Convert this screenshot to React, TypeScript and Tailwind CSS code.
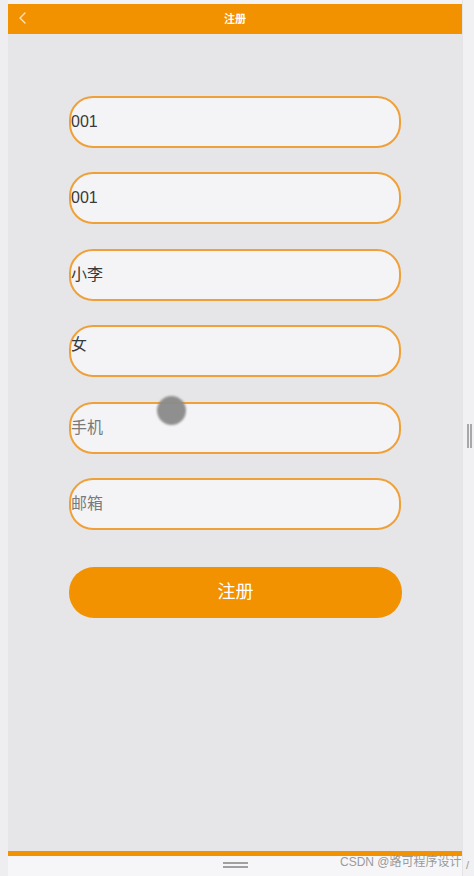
import React from "react";

const font = { fontFamily: '"Liberation Sans", "Noto Sans CJK SC", sans-serif' };

function Field({ value, placeholder, top }: { value?: string; placeholder?: string; top?: boolean }) {
  return (
    <div
      className={`w-[332px] h-[52px] rounded-[24px] border-2 border-[#efa038] bg-[#f4f4f6] flex ${top ? "items-start pt-[10px]" : "items-center"}`}
    >
      {value ? (
        <span className="text-[16px] text-[#3a3a3a] leading-none">{value}</span>
      ) : (
        <span className="text-[16px] text-[#7a7a7a] leading-none">{placeholder}</span>
      )}
    </div>
  );
}

export default function App() {
  return (
    <div className="w-[474px] h-[876px] bg-[#f3f3f5] flex relative overflow-hidden" style={font}>
      <div className="w-[8px] bg-[#eeeef0]" />
      <div className="w-[454px] flex flex-col">
        <div className="h-[4px]" />
        <div className="h-[30px] bg-[#f39200] flex items-center relative">
          <svg className="absolute left-[8px] top-[7px]" width="14" height="14" viewBox="0 0 14 14" fill="none">
            <path d="M9 2 L4 7 L9 12" stroke="#fce3bf" strokeWidth="1.4" strokeLinecap="round" strokeLinejoin="round" />
          </svg>
          <div className="flex-1 text-center text-white text-[11px] font-bold">注册</div>
        </div>
        <div className="flex-1 bg-[#e6e6e8] flex flex-col pl-[61px] pt-[62px]">
          <div className="flex flex-col gap-[24.4px]">
            <Field value="001" />
            <Field value="001" />
            <Field value="小李" />
            <Field value="女" top />
            <Field placeholder="手机" />
            <Field placeholder="邮箱" />
          </div>
          <button className="mt-[37px] w-[333px] h-[51px] rounded-[25px] bg-[#f39200] text-white text-[18px] flex items-center justify-center">
            注册
          </button>
        </div>
        <div className="h-[5px] bg-[#f39200]" />
        <div className="h-[20px] bg-[#f6f6f8] flex items-start justify-center pt-[6px]">
          <div className="flex flex-col gap-[2px]">
            <div className="w-[25px] h-[2px] bg-[#a0a0a0]" />
            <div className="w-[25px] h-[2px] bg-[#a0a0a0]" />
          </div>
        </div>
      </div>
      <div className="flex-1 bg-[#f1f1f3] border-l border-[#e4e4e6] flex items-center justify-end pr-[2px]">
        <div className="flex gap-[1px] mb-[4px]">
          <div className="w-[2px] h-[24px] bg-[#a8a8a8]" />
          <div className="w-[2px] h-[24px] bg-[#a8a8a8]" />
        </div>
      </div>
      <div className="absolute left-[157px] top-[396px] w-[29px] h-[29px] rounded-full bg-[#8a8a8a] blur-[1px] opacity-95" />
      <div className="absolute left-[340px] top-[856px] text-[12px] text-[#9a9a9a] leading-none whitespace-nowrap">
        CSDN @路可程序设计
      </div>
      <div className="absolute left-[466px] top-[860px] text-[11px] text-[#9a9a9a] leading-none">/</div>
    </div>
  );
}
